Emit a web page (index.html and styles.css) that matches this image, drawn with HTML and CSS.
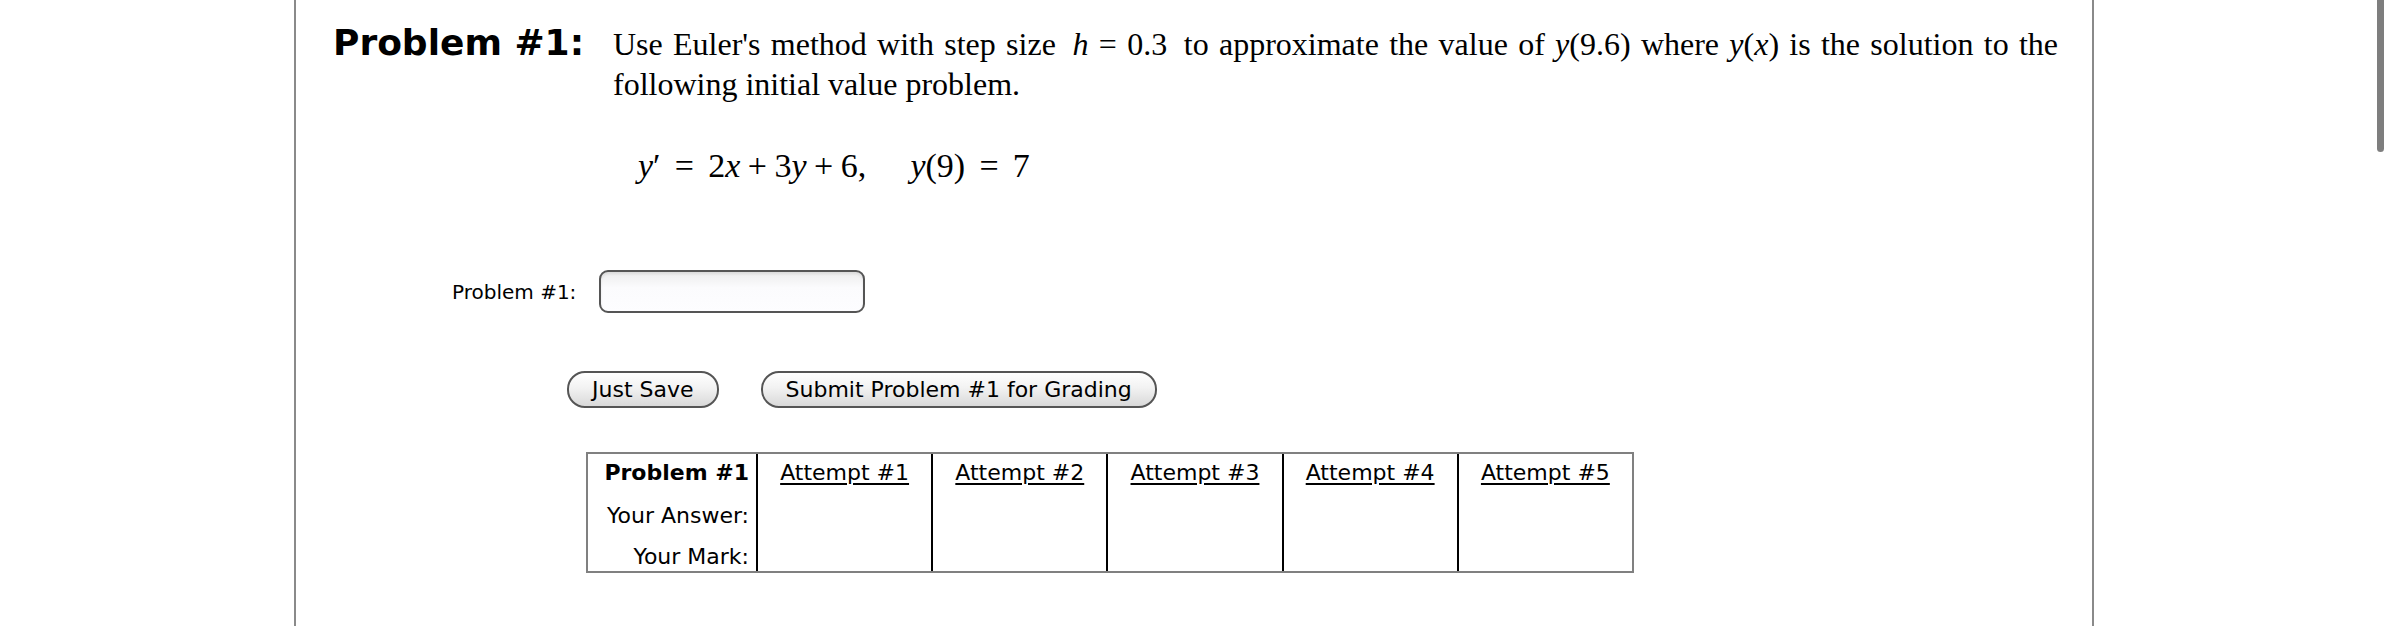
FILE: index.html
```html
<!DOCTYPE html>
<html lang="en">
<head>
<meta charset="utf-8">
<title>Problem #1</title>
<link rel="stylesheet" href="styles.css">
</head>
<body>
<div class="page">
  <div class="problem">
    <div class="pnum">Problem #1:</div>
    <div class="ptext">
      <p class="stmt">Use Euler's method with step size <span class="math"><i>h</i> = 0.3</span> to approximate the value of <i>y</i>(9.6) where <i>y</i>(<i>x</i>) is the solution to the following initial value problem.</p>
      <div class="eq"><i>y</i>&#8242;<span class="rel">=</span>2<i>x</i><span class="op">+</span>3<i>y</i><span class="op">+</span>6,<span class="sep"></span><i>y</i>(9)<span class="rel">=</span>7</div>
    </div>
  </div>
  <div class="answer-row">
    <label class="alabel" for="ans1">Problem #1:</label>
    <input class="ans" id="ans1" type="text">
  </div>
  <div class="buttons">
    <button class="btn" type="button">Just Save</button>
    <button class="btn" type="button">Submit Problem #1 for Grading</button>
  </div>
  <table class="attempts">
    <tr class="r1">
      <th class="rowhead">Problem #1</th>
      <td><a href="#">Attempt #1</a></td>
      <td><a href="#">Attempt #2</a></td>
      <td><a href="#">Attempt #3</a></td>
      <td><a href="#">Attempt #4</a></td>
      <td><a href="#">Attempt #5</a></td>
    </tr>
    <tr class="r2">
      <td class="rowlabel">Your Answer:</td>
      <td></td><td></td><td></td><td></td><td></td>
    </tr>
    <tr class="r3">
      <td class="rowlabel">Your Mark:</td>
      <td></td><td></td><td></td><td></td><td></td>
    </tr>
  </table>
</div>
<div class="scroll-thumb"></div>
</body>
</html>
```

FILE: styles.css
```css
html, body {
  margin: 0;
  padding: 0;
  height: 626px;
  overflow: hidden;
  background: #fff;
}
body {
  font-family: "DejaVu Sans", Verdana, sans-serif;
  color: #000;
}
.page {
  width: 1800px;
  box-sizing: border-box;
  margin: 0 auto;
  height: 626px;
  border-left: 2px solid #8a8a8a;
  border-right: 2px solid #8a8a8a;
}
.problem {
  display: flex;
  align-items: baseline;
  padding: 23px 34px 0 37px;
}
.pnum {
  flex: 0 0 280px;
  font-weight: bold;
  font-size: 36px;
  line-height: 40px;
}
.ptext {
  flex: 1;
  font-family: "Liberation Serif", "Times New Roman", serif;
  font-size: 32px;
  line-height: 40px;
}
.stmt {
  margin: 0;
  text-align: justify;
}
.math {
  margin: 0 0.2em;
}
.eq {
  margin: 42px 0 0 25px;
  font-size: 34px;
}
.rel {
  margin: 0 0.42em;
}
.op {
  margin: 0 0.22em;
}
.sep {
  display: inline-block;
  width: 1.3em;
}
.answer-row {
  display: flex;
  align-items: center;
  gap: 23px;
  margin: 84px 0 0 156px;
}
.alabel {
  font-size: 20px;
}
.ans {
  width: 266px;
  height: 43px;
  box-sizing: border-box;
  border: 2px solid #555;
  border-radius: 9px;
  background: linear-gradient(#ececec, #fbfbfd 40%, #fdfdff);
  box-shadow: inset 0 2px 3px rgba(0,0,0,0.08);
  margin: 0;
  padding: 0 8px;
  font: 20px "DejaVu Sans", sans-serif;
}
.buttons {
  display: flex;
  gap: 42px;
  margin: 58px 0 0 271px;
}
.btn {
  height: 37px;
  box-sizing: border-box;
  padding: 0 23px;
  border: 2px solid #555;
  border-radius: 18px;
  background: linear-gradient(#ffffff, #f2f2f2 45%, #d9d9d9);
  font: 22px "DejaVu Sans", Verdana, sans-serif;
  color: #000;
  line-height: 33px;
  margin: 0;
}
.attempts {
  margin: 44px 0 0 290px;
  width: 1048px;
  table-layout: fixed;
  border-collapse: separate;
  border-spacing: 0;
  border: 2px solid #808080;
  font-size: 22px;
}
.attempts th,
.attempts td {
  padding: 0 8px;
  line-height: 24px;
  vertical-align: top;
  text-align: center;
  border-left: 2px solid #000;
  box-sizing: border-box;
}
.attempts .r1 > * {
  height: 38px;
  padding-top: 7px;
}
.attempts .r2 > * {
  height: 41px;
  padding-top: 12px;
}
.attempts .r3 > * {
  height: 38px;
  padding-top: 12px;
}
.attempts tr > :first-child {
  border-left: none;
  width: 168px;
  text-align: right;
  padding-right: 7px;
}
.rowhead {
  font-weight: bold;
}
.attempts a {
  color: #000;
  text-decoration: underline;
  text-underline-offset: 3px;
}
.scroll-thumb {
  position: absolute;
  top: -6px;
  right: 4px;
  width: 7px;
  height: 158px;
  border-radius: 4px;
  background: #7e7e7e;
}
```
